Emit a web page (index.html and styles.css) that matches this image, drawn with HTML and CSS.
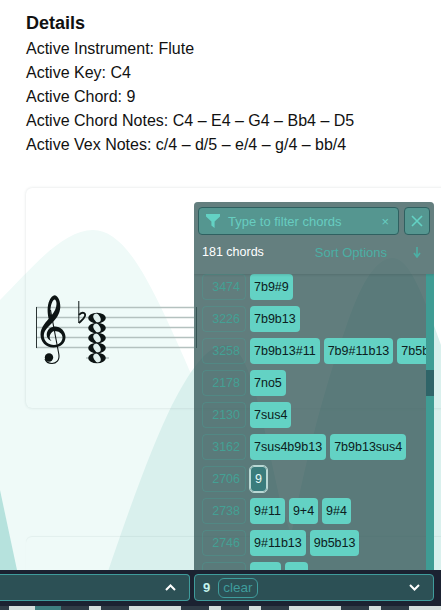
FILE: index.html
```html
<!DOCTYPE html>
<html lang="en">
<head>
<meta charset="utf-8">
<title>Chord details</title>
<link rel="stylesheet" href="styles.css">
</head>
<body>
<div class="page">
  <svg class="waves" width="441" height="610" viewBox="0 0 441 610" aria-hidden="true">
    <path class="wave-a" d="M0 300 C30 270 62 230 93 230 C125 230 150 280 185 360 C215 430 250 500 300 610 L0 610 Z"/>
    <path class="wave-b" d="M95 610 C125 520 150 450 172 405 C188 375 205 345 226 345 C250 345 262 420 280 500 L315 610 Z"/>
    <path class="wave-b" d="M278 610 C295 500 320 400 345 330 C360 285 375 258 393 258 C410 258 425 300 441 345 L441 610 Z"/>
    <path class="wave-c" d="M0 490 L17 570 L17 610 L0 610 Z"/>
  </svg>

  <main class="content">
    <section class="details">
      <h2 class="details-title">Details</h2>
      <p class="details-line">Active Instrument: Flute</p>
      <p class="details-line">Active Key: C4</p>
      <p class="details-line">Active Chord: 9</p>
      <p class="details-line">Active Chord Notes: C4 – E4 – G4 – Bb4 – D5</p>
      <p class="details-line">Active Vex Notes: c/4 – d/5 – e/4 – g/4 – bb/4</p>
    </section>

    <section class="card">
      <svg class="staff" width="172" height="80" viewBox="36 292 172 80" aria-label="Notation">
        <g class="staff-lines">
          <path d="M36 307.5H194M36 317.5H194M36 327.5H194M36 337.5H194M36 347.5H194"/>
          <path d="M86 358H109"/>
        </g>
        <path class="bar" d="M36.5 307V348M196.5 307V348"/>
        <g class="clef">
          <path class="clef-thick" d="M53.5 331 C50 333 48 338 51.5 341 C47 339.5 45 334 48.5 329.5 C50 327.5 52 327 54 326.5 C60 326 65.5 331 65.5 337 C65.5 343.5 60 347.5 53.5 347.5 C45.5 347.5 40.5 341.5 40.5 334.5 C40.5 327 46.5 321.5 51 316 C54.5 311.8 56.5 308 56.5 304 C56.5 301 55.5 299.5 54.5 299.5 C52 300.5 50.5 306 50.5 310.5 C50.5 313 51 315 51.5 317 L48.8 319.5 C48 316 47.6 313 47.6 310 C47.6 303 50.5 295.5 54.8 295.2 C58.5 296 60.5 302 60.3 307 C60 314 56 319 52 323 C48 327.5 43.8 330 43.8 336 C43.8 341 48.5 345 54 345 C59 345 62.5 341.5 62.5 337.5 C62.5 333.5 58.5 330 54 331.5 Z"/>
          <path class="clef-line" d="M50.5 310 L58.8 354 C60 360.5 56 363.5 52 363.5 C49 363.5 46 362 45 359"/>
          <circle cx="49" cy="357.5" r="4.2"/>
        </g>
        <g class="flat">
          <path class="flat-stem" d="M78.8 301V323"/>
          <path class="flat-bowl" d="M79 315 C82 311 86 313 85 316 C84 319 81 321 79 323"/>
        </g>
        <g class="heads">
          <g transform="translate(97 318)"><ellipse rx="8.8" ry="5.3"/><ellipse class="hole" rx="3.2" ry="4.6" transform="rotate(-30)"/></g>
          <g transform="translate(97 328)"><ellipse rx="8.8" ry="5.3"/><ellipse class="hole" rx="3.2" ry="4.6" transform="rotate(-30)"/></g>
          <g transform="translate(97 338)"><ellipse rx="8.8" ry="5.3"/><ellipse class="hole" rx="3.2" ry="4.6" transform="rotate(-30)"/></g>
          <g transform="translate(97 348)"><ellipse rx="8.8" ry="5.3"/><ellipse class="hole" rx="3.2" ry="4.6" transform="rotate(-30)"/></g>
          <g transform="translate(97 358)"><ellipse rx="8.8" ry="5.3"/><ellipse class="hole" rx="3.2" ry="4.6" transform="rotate(-30)"/></g>
        </g>
      </svg>
    </section>
    <section class="card card-next"></section>
  </main>

  <aside class="panel">
    <header class="panel-head">
      <div class="filter-row">
        <div class="filter">
          <svg class="funnel" width="14" height="14" viewBox="0 0 14 14"><path d="M0 0H14V2.4L8.6 7.4V14L5.4 11.6V7.4L0 2.4Z"/></svg>
          <span class="filter-text">Type to filter chords</span>
          <span class="filter-x">×</span>
        </div>
        <button class="close" type="button" aria-label="Close">
          <svg width="12" height="12" viewBox="0 0 12 12"><path d="M1 1L11 11M11 1L1 11"/></svg>
        </button>
      </div>
      <div class="meta-row">
        <span class="count">181 chords</span>
        <span class="sort">Sort Options</span>
        <svg class="sort-arrow" width="8" height="11" viewBox="0 0 8 11"><path d="M4 0V9M1 6L4 10L7 6"/></svg>
      </div>
    </header>
    <div class="panel-body">
      <div class="list">
        <div class="row"><span class="num">3474</span><span class="chip">7b9#9</span></div>
        <div class="row"><span class="num">3226</span><span class="chip">7b9b13</span></div>
        <div class="row"><span class="num">3258</span><span class="chip">7b9b13#11</span><span class="chip">7b9#11b13</span><span class="chip">7b5b13</span></div>
        <div class="row"><span class="num">2178</span><span class="chip">7no5</span></div>
        <div class="row"><span class="num">2130</span><span class="chip">7sus4</span></div>
        <div class="row"><span class="num">3162</span><span class="chip">7sus4b9b13</span><span class="chip">7b9b13sus4</span></div>
        <div class="row"><span class="num">2706</span><span class="chip chip-active">9</span></div>
        <div class="row"><span class="num">2738</span><span class="chip">9#11</span><span class="chip">9+4</span><span class="chip">9#4</span></div>
        <div class="row"><span class="num">2746</span><span class="chip">9#11b13</span><span class="chip">9b5b13</span></div>
      </div>
      <div class="scroll"><div class="thumb"></div></div>
    </div>
  </aside>

  <footer class="dock">
    <div class="selects">
      <div class="select select-left">
        <svg class="chev" width="11" height="7" viewBox="0 0 11 7"><path d="M1 6L5.5 1.5L10 6"/></svg>
      </div>
      <div class="select select-right">
        <span class="sel-value">9</span>
        <span class="clear">clear</span>
        <svg class="chev" width="11" height="7" viewBox="0 0 11 7"><path d="M1 1L5.5 5.5L10 1"/></svg>
      </div>
    </div>
    <div class="keys">
      <i class="k d w9"></i><i class="k l w26"></i><i class="k t w26"></i><i class="k d w28"></i><i class="k l w12"></i><i class="k d w28"></i><i class="k l w52"></i><i class="k d w28"></i><i class="k l w12"></i><i class="k d w28"></i><i class="k l w12"></i><i class="k d w28"></i><i class="k l w52"></i><i class="k d w28"></i><i class="k l w12"></i><i class="k d w28"></i><i class="k l w32"></i>
    </div>
  </footer>

  <div class="peek">
    <span class="peek-num"></span><span class="peek-chip peek-a"></span><span class="peek-chip peek-b"></span>
  </div>
</div>
</body>
</html>
```

FILE: styles.css
```css
* { box-sizing: border-box; }
html, body { margin: 0; padding: 0; }
body { font-family: "Liberation Sans", Arial, sans-serif; color: #111; background: #fff; }

.page { position: relative; width: 441px; height: 610px; overflow: hidden; background: #fff; }

.waves { position: absolute; left: 0; top: 0; }
.wave-a { fill: #effaf8; }
.wave-b { fill: #d9f0ed; }
.wave-c { fill: #b6e2dd; }

.content { position: relative; padding: 11px 0 0 26px; }
.details-title { margin: 0 0 2px; font-size: 18px; line-height: 24px; font-weight: 700; color: #111; }
.details-line { margin: 0; font-size: 16px; line-height: 24px; }

.card { width: 500px; height: 220px; margin-top: 31px; border-radius: 6px; box-shadow: 0 0 3px rgba(40,70,70,.16); padding: 104px 0 0 10px; }
.card-next { margin-top: 129px; height: 100px; padding: 0; box-shadow: 0 -1px 1px rgba(40,70,70,.06); }
.staff { display: block; overflow: visible; }
.staff-lines path { stroke: #b4c1bf; stroke-width: 1.4; fill: none; }
.bar { stroke: #2b3535; stroke-width: 1; fill: none; }
.clef-thick { fill: #0d1414; }
.clef-line { fill: none; stroke: #0d1414; stroke-width: 1.1; }
.clef circle { fill: #0d1414; }
.flat-stem { stroke: #0d1414; stroke-width: 1; }
.flat-bowl { fill: none; stroke: #0d1414; stroke-width: 1.8; }
.heads ellipse { fill: #0d1414; }
.heads .hole { fill: #dfeeec; }

.panel { position: absolute; left: 194px; top: 202px; width: 240px; height: 368px; border-radius: 4px 4px 0 0; background: rgba(58,92,92,.8); display: flex; flex-direction: column; overflow: hidden; }
.panel-head { height: 72px; padding: 5px 4px 0; background: rgba(110,135,135,.32); box-shadow: 0 1px 2px rgba(30,50,50,.18); position: relative; }
.filter-row { display: flex; gap: 5px; }
.filter { flex: 1; height: 28px; display: flex; align-items: center; padding: 0 9px 0 7px; background: #559690; border: 1px solid #2f6060; border-radius: 4px; }
.funnel { fill: #63d2c4; }
.filter-text { margin-left: 8px; flex: 1; font-size: 13px; color: #67cdc0; }
.filter-x { font-size: 13px; color: #67cdc0; }
.close { width: 26px; height: 28px; padding: 0; display: flex; align-items: center; justify-content: center; background: #559690; border: 1px solid #2f6060; border-radius: 4px; }
.close path { stroke: #63d2c4; stroke-width: 1.6; fill: none; }
.meta-row { display: flex; align-items: center; height: 34px; padding: 0 9px 0 4px; }
.count { flex: 1; font-size: 12.5px; color: #fff; }
.sort { font-size: 13px; color: #4bb0a5; }
.sort-arrow { margin-left: 26px; }
.sort-arrow path { stroke: #4bb0a5; stroke-width: 1.6; fill: none; }

.panel-body { flex: 1; display: flex; min-height: 0; }
.list { flex: 1; min-width: 0; overflow: hidden; padding-left: 8px; display: flex; flex-direction: column; gap: 6px; }
.row { display: flex; gap: 4px; flex: none; height: 26px; }
.num { flex: none; width: 44px; height: 26px; border: 1px solid rgba(72,160,150,.38); border-radius: 4px; text-align: right; padding-right: 5px; font-size: 12.5px; line-height: 24px; color: #44a094; }
.chip { flex: none; height: 26px; padding: 0 4px; background: #63d2c4; border-radius: 4px; font-size: 12.5px; line-height: 26px; color: #0c2020; }
.chip-active { background: #3a7c7c; color: #e6fbf8; border: 1px solid #b9d8d4; outline: 1px solid #b9d8d4; line-height: 24px; }
.scroll { flex: none; width: 8px; background: #3f9c94; }
.thumb { margin-top: 96px; height: 26px; background: #2f6468; }

.peek { position: absolute; left: 202px; top: 562px; height: 8px; display: flex; gap: 4px; overflow: hidden; }
.peek-num { width: 44px; height: 26px; border: 1px solid rgba(72,160,150,.38); border-radius: 4px; }
.peek-chip { height: 26px; background: #63d2c4; border-radius: 4px; }
.peek-a { width: 31px; }
.peek-b { width: 23px; }

.dock { position: absolute; left: 0; right: 0; bottom: 0; height: 40px; background: #1b2231; display: flex; flex-direction: column; }
.selects { flex: 1; display: flex; gap: 4px; padding: 4px 7px 5px 0; }
.select { display: flex; align-items: center; height: 27px; background: #2c5055; border: 1px solid #3f9c9c; border-radius: 4px; }
.select-left { width: 190px; justify-content: flex-end; padding-right: 13px; border-radius: 0 4px 4px 0; border-left: 0; }
.select-right { flex: 1; padding: 0 13px 0 8px; }
.chev { flex: none; }
.chev path { stroke: #fff; stroke-width: 2; fill: none; }
.sel-value { font-size: 13px; font-weight: 700; color: #c4f4ee; }
.clear { margin-left: 8px; margin-right: auto; height: 20px; padding: 0 4px; border: 1px solid #3f9c9c; border-radius: 6px; font-size: 13.5px; line-height: 18px; color: #3f9c9c; }

.keys { display: flex; height: 4px; flex: none; }
.k { display: block; flex: none; }
.d { background: #2f3c46; }
.l { background: #d4dedc; }
.t { background: #3f7f80; }
.w9 { width: 9px; } .w12 { width: 12px; } .w26 { width: 26px; } .w28 { width: 28px; } .w32 { width: 32px; } .w52 { width: 52px; }
```
